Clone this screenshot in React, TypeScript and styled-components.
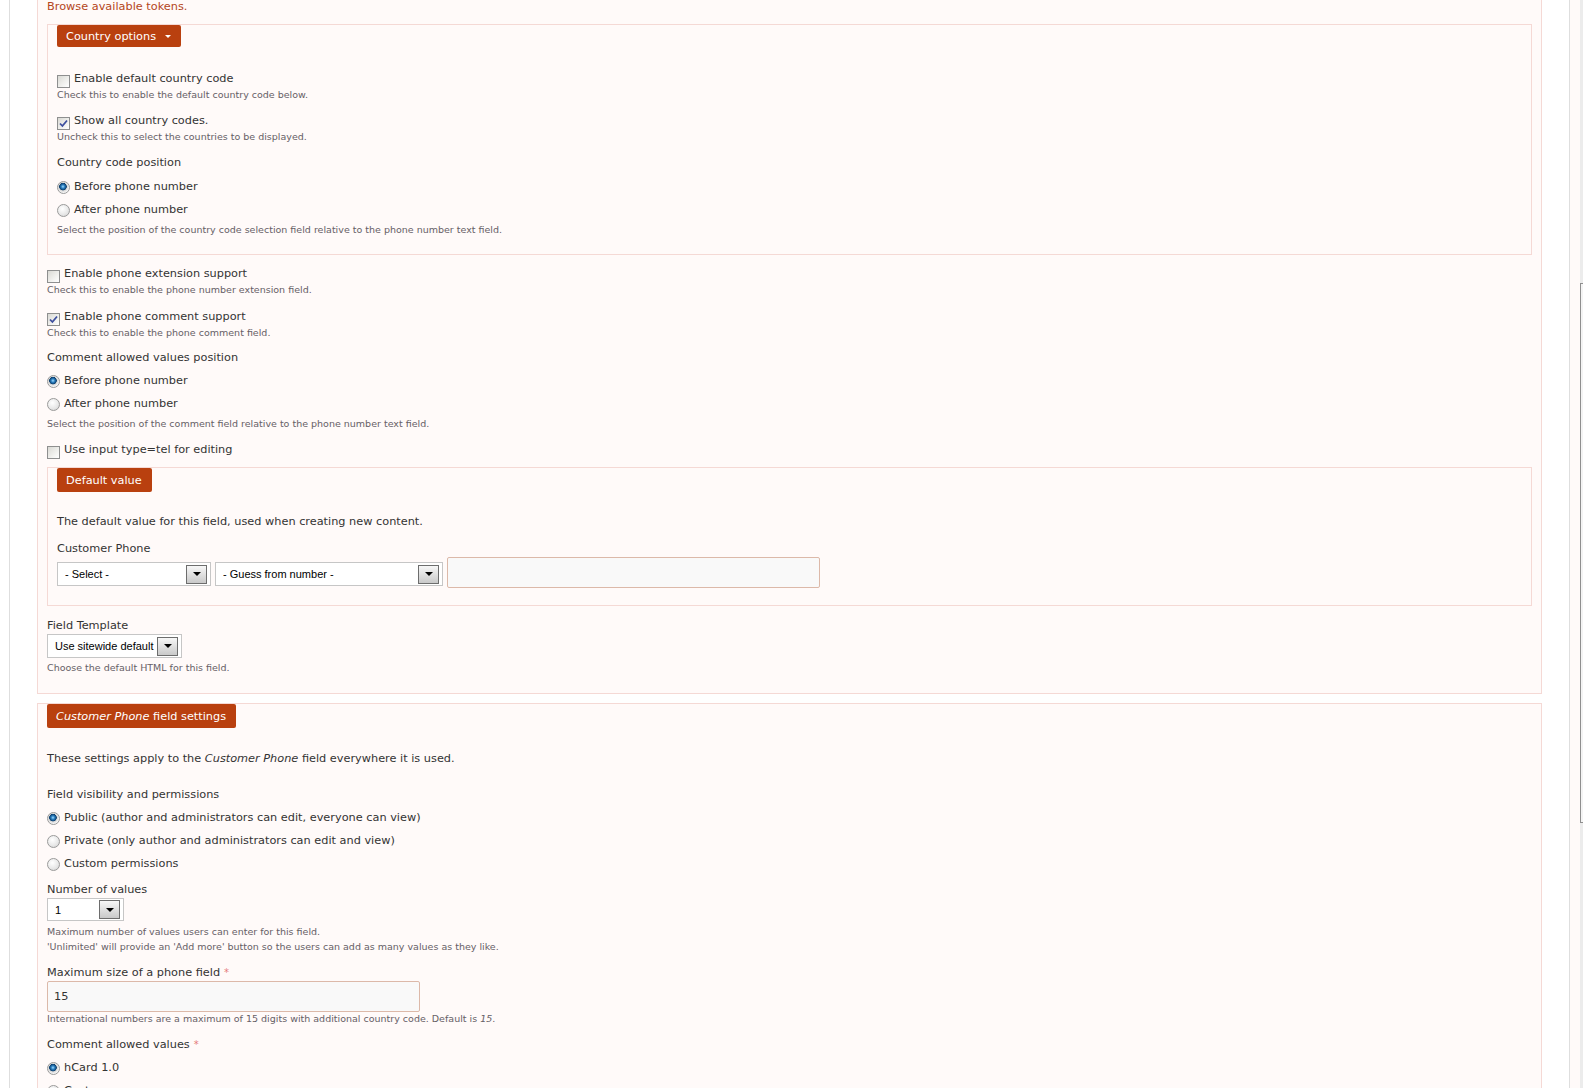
import React from "react"
import styled, { createGlobalStyle } from "styled-components"

const GlobalStyle = createGlobalStyle`
  html, body {
    margin: 0;
    padding: 0;
    background: #ffffff;
  }
  body {
    font-family: "DejaVu Sans", Verdana, sans-serif;
    font-size: 11.3px;
    color: #333333;
  }
`

const Page = styled.div`
  display: flex;
  width: 1583px;
  height: 1088px;
  overflow: hidden;
  padding-left: 9px;
  box-sizing: border-box;
`

const Frame = styled.div`
  flex: none;
  width: 1561px;
  box-sizing: border-box;
  border-left: 1px solid #dedede;
  border-right: 1px solid #dedede;
  padding: 0 27px;
  background: #ffffff;
`

const SideStrip = styled.div`
  flex: none;
  width: 10px;
  background: #fffaf9;
`

const ScrollTrack = styled.div`
  flex: none;
  width: 3px;
  display: flex;
  flex-direction: column;
  background: #ececec;
`

const ScrollThumb = styled.div`
  margin-top: 283px;
  height: 540px;
  box-sizing: border-box;
  border: 1px solid #8f8f8f;
  border-right: none;
  background: #f4f4f4;
`

const Fieldset = styled.div<{ $mt?: number; $open?: boolean; $pb?: number }>`
  box-sizing: border-box;
  margin-top: ${({ $mt }) => $mt ?? 0}px;
  border: 1px solid #f5d9d5;
  ${({ $open }) => ($open ? "border-top: none;" : "")}
  background: #fffaf9;
  padding: 0 9px ${({ $pb }) => $pb ?? 17}px;
`

const Legend = styled.div<{ $h?: number }>`
  display: flex;
  align-items: center;
  width: max-content;
  height: ${({ $h }) => $h ?? 24}px;
  padding: 0 10px 0 9px;
  background: #b9400f;
  color: #ffffff;
  border-radius: 2px;
  white-space: pre;

  & em {
    font-style: italic;
  }
`

const Caret = styled.span`
  width: 0;
  height: 0;
  margin-left: 9px;
  border-left: 3px solid transparent;
  border-right: 3px solid transparent;
  border-top: 3px solid #ffffff;
`

const TokenLink = styled.div`
  margin-top: -1px;
  line-height: 16px;
  color: #b4461c;
`

const Title = styled.div<{ $mt?: number }>`
  margin-top: ${({ $mt }) => $mt ?? 0}px;
  line-height: 16px;
  color: #333333;

  & em {
    font-style: italic;
  }
`

const Req = styled.span`
  margin-left: 4px;
  color: #e57b7b;
  font-size: 10px;
`

const Desc = styled.div<{ $mt?: number }>`
  margin-top: ${({ $mt }) => $mt ?? 0}px;
  font-size: 9.5px;
  line-height: 15px;
  color: #666066;

  & em {
    font-style: italic;
  }
`

const Item = styled.div<{ $mt?: number }>`
  margin-top: ${({ $mt }) => $mt ?? 0}px;
`

const OptionRow = styled.div<{ $h?: number }>`
  display: flex;
  align-items: center;
  height: ${({ $h }) => $h ?? 16}px;
  line-height: 16px;
  color: #333333;
`

const Box = styled.span`
  flex: none;
  display: flex;
  align-items: center;
  justify-content: center;
  width: 13px;
  height: 13px;
  box-sizing: border-box;
  margin: 4px 4px 0 0;
  border: 1px solid #8e8f8f;
  background: linear-gradient(135deg, #d9d9d4 0%, #ededea 50%, #ffffff 100%);
`

const RadioDot = styled.span<{ $on?: boolean }>`
  flex: none;
  width: 13px;
  height: 13px;
  box-sizing: border-box;
  margin: 1px 4px 0 0;
  border-radius: 50%;
  border: 1px solid #9a9a9a;
  background: ${({ $on }) =>
    $on
      ? "radial-gradient(circle at 45% 42%, #9fdcff 0, #2b7fc0 20%, #0c3d6b 40%, #d6d6d6 46%, #ffffff 75%)"
      : "radial-gradient(circle at 40% 35%, #ffffff 0, #e9e9e9 55%, #cfcfcf 100%)"};
`

const RadioGroup = styled.div<{ $mt?: number }>`
  display: flex;
  flex-direction: column;
  gap: 5px;
  margin-top: ${({ $mt }) => $mt ?? 0}px;
`

const Row = styled.div`
  display: flex;
  align-items: flex-start;
  gap: 4px;
`

const Select = styled.div<{ $w: number; $h: number; $mt?: number }>`
  flex: none;
  display: flex;
  align-items: center;
  box-sizing: border-box;
  width: ${({ $w }) => $w}px;
  height: ${({ $h }) => $h}px;
  margin-top: ${({ $mt }) => $mt ?? 0}px;
  padding: 0 3px 0 7px;
  border: 1px solid #c6c6c6;
  background: #ffffff;
  font-family: "Liberation Sans", Arial, sans-serif;
  font-size: 11px;
  color: #000000;
`

const SelectText = styled.span`
  flex: 1;
  white-space: nowrap;
  overflow: hidden;
`

const SelectArrow = styled.span`
  flex: none;
  display: flex;
  align-items: center;
  justify-content: center;
  width: 21px;
  height: 19px;
  box-sizing: border-box;
  border: 1px solid #6d6d6d;
  background: linear-gradient(#f7f7f7, #c9c9c9);

  &::after {
    content: "";
    border-left: 4px solid transparent;
    border-right: 4px solid transparent;
    border-top: 4px solid #000000;
  }
`

const TextInput = styled.div<{ $w: number }>`
  flex: none;
  display: flex;
  align-items: center;
  box-sizing: border-box;
  width: ${({ $w }) => $w}px;
  height: 31px;
  padding: 0 6px;
  border: 1px solid #dcb9a9;
  border-radius: 2px;
  background: #f9f9f9;
  color: #333333;
`

const CheckMark = (): JSX.Element => (
  <svg width="9" height="9" viewBox="0 0 9 9">
    <path d="M1 4.5 L3.4 7 L8 1.5" fill="none" stroke="#3d4f9e" strokeWidth="1.8" />
  </svg>
)

interface CheckProps {
  mt: number
  label: string
  desc?: string
  checked?: boolean
}

const CheckItem = ({ mt, label, desc, checked }: CheckProps): JSX.Element => (
  <Item $mt={mt}>
    <OptionRow>
      <Box>{checked && <CheckMark />}</Box>
      {label}
    </OptionRow>
    {desc && <Desc>{desc}</Desc>}
  </Item>
)

interface RadioProps {
  mt: number
  options: string[]
  selected: number
}

const Radios = ({ mt, options, selected }: RadioProps): JSX.Element => (
  <RadioGroup $mt={mt}>
    {options.map(
      (option, i): JSX.Element => (
        <OptionRow key={option} $h={18}>
          <RadioDot $on={i === selected} />
          {option}
        </OptionRow>
      )
    )}
  </RadioGroup>
)

interface DropDownProps {
  w: number
  h?: number
  mt?: number
  text: string
}

const DropDown = ({ w, h, text, mt }: DropDownProps): JSX.Element => (
  <Select $w={w} $h={h ?? 24} $mt={mt}>
    <SelectText>{text}</SelectText>
    <SelectArrow />
  </Select>
)

const App = (): JSX.Element => (
  <>
    <GlobalStyle />
    <Page>
      <Frame>
        <Fieldset $open $pb={18}>
          <TokenLink>Browse available tokens.</TokenLink>
          <Fieldset $mt={9}>
            <Legend $h={22}>
              Country options
              <Caret />
            </Legend>
            <CheckItem
              mt={24}
              label="Enable default country code"
              desc="Check this to enable the default country code below."
            />
            <CheckItem
              mt={11}
              checked
              label="Show all country codes."
              desc="Uncheck this to select the countries to be displayed."
            />
            <Title $mt={11}>Country code position</Title>
            <Radios mt={7} options={["Before phone number", "After phone number"]} selected={0} />
            <Desc $mt={3}>
              Select the position of the country code selection field relative to the phone number text field.
            </Desc>
          </Fieldset>

          <CheckItem
            mt={11}
            label="Enable phone extension support"
            desc="Check this to enable the phone number extension field."
          />
          <CheckItem
            mt={12}
            checked
            label="Enable phone comment support"
            desc="Check this to enable the phone comment field."
          />
          <Title $mt={10}>Comment allowed values position</Title>
          <Radios mt={6} options={["Before phone number", "After phone number"]} selected={0} />
          <Desc $mt={3}>Select the position of the comment field relative to the phone number text field.</Desc>
          <CheckItem mt={11} label="Use input type=tel for editing" />

          <Fieldset $mt={9}>
            <Legend>Default value</Legend>
            <Title $mt={22}>The default value for this field, used when creating new content.</Title>
            <Title $mt={11}>Customer Phone</Title>
            <Row>
              <DropDown w={154} mt={5} text="- Select -" />
              <DropDown w={228} mt={5} text="- Guess from number -" />
              <TextInput $w={373} />
            </Row>
          </Fieldset>

          <Title $mt={12}>Field Template</Title>
          <DropDown w={135} text="Use sitewide default" />
          <Desc $mt={2}>Choose the default HTML for this field.</Desc>
        </Fieldset>

        <Fieldset $mt={9}>
          <Legend>
            <em>Customer Phone</em> field settings
          </Legend>
          <Title $mt={23}>
            These settings apply to the <em>Customer Phone</em> field everywhere it is used.
          </Title>
          <Title $mt={20}>Field visibility and permissions</Title>
          <Radios
            mt={6}
            options={[
              "Public (author and administrators can edit, everyone can view)",
              "Private (only author and administrators can edit and view)",
              "Custom permissions",
            ]}
            selected={0}
          />
          <Title $mt={9}>Number of values</Title>
          <DropDown w={77} h={23} text="1" />
          <Desc $mt={3}>
            Maximum number of values users can enter for this field.
            <br />
            'Unlimited' will provide an 'Add more' button so the users can add as many values as they like.
          </Desc>
          <Title $mt={11}>
            Maximum size of a phone field<Req>*</Req>
          </Title>
          <TextInput $w={373}>15</TextInput>
          <Desc $mt={-1}>
            International numbers are a maximum of 15 digits with additional country code. Default is <em>15</em>.
          </Desc>
          <Title $mt={11}>
            Comment allowed values<Req>*</Req>
          </Title>
          <Radios mt={6} options={["hCard 1.0", "Custom"]} selected={0} />
        </Fieldset>
      </Frame>
      <SideStrip />
      <ScrollTrack>
        <ScrollThumb />
      </ScrollTrack>
    </Page>
  </>
)

export default App
